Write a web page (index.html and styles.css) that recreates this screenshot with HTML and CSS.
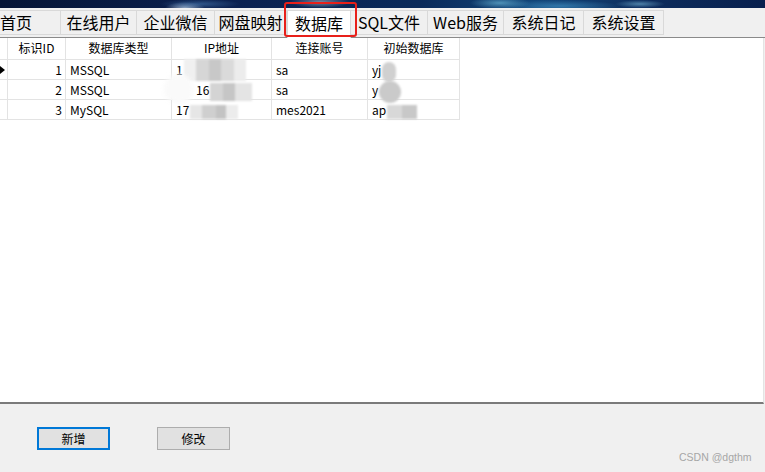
FILE: index.html
```html
<!DOCTYPE html>
<html lang="zh">
<head>
<meta charset="utf-8">
<link rel="stylesheet" href="styles.css">
</head>
<body>
<div class="window">
  <div class="banner"></div>
  <div class="tabstrip">
    <div class="tab first">首页</div>
    <div class="tab w75">在线用户</div>
    <div class="tab w78">企业微信</div>
    <div class="tab w72">网盘映射</div>
    <div class="tab sel">数据库</div>
    <div class="tab w77">SQL文件</div>
    <div class="tab w75">Web服务</div>
    <div class="tab w80">系统日记</div>
    <div class="tab w80">系统设置</div>
  </div>
  <div class="grid-area">
    <div class="grid">
      <div class="hc rh"></div>
      <div class="hc">标识ID</div>
      <div class="hc">数据库类型</div>
      <div class="hc">IP地址</div>
      <div class="hc">连接账号</div>
      <div class="hc">初始数据库</div>

      <div class="c rh"><span class="arrow"></span></div>
      <div class="c num">1</div>
      <div class="c">MSSQL</div>
      <div class="c">1<span class="mosaic m1"></span></div>
      <div class="c">sa</div>
      <div class="c">yj<span class="mosaic m4"></span></div>

      <div class="c rh"></div>
      <div class="c num">2</div>
      <div class="c">MSSQL</div>
      <div class="c"><span class="white-blob"></span><span class="txt">16</span><span class="mosaic m2"></span></div>
      <div class="c">sa</div>
      <div class="c">y<span class="mosaic m5"></span></div>

      <div class="c rh"></div>
      <div class="c num">3</div>
      <div class="c">MySQL</div>
      <div class="c">17<span class="mosaic m3"></span></div>
      <div class="c">mes2021</div>
      <div class="c">ap<span class="mosaic m6"></span></div>
    </div>
  </div>
  <div class="bottom">
    <button class="btn primary">新增</button>
    <button class="btn">修改</button>
    <span class="watermark">CSDN @dgthm</span>
  </div>
  <div class="annot"></div>
</div>
</body>
</html>
```
FILE: styles.css
```css
html, body {
  margin: 0;
  padding: 0;
}
body {
  width: 765px;
  height: 472px;
  overflow: hidden;
  background: #f0f0f0;
  font-family: "Noto Sans CJK SC", "Noto Sans", sans-serif;
  color: #000;
}
.window {
  position: relative;
  width: 765px;
  height: 472px;
  display: flex;
  flex-direction: column;
}
.banner {
  height: 8px;
  background:
    radial-gradient(ellipse 40px 5px at 200px 4px, rgba(90,150,210,0.45), transparent),
    radial-gradient(ellipse 30px 6px at 500px 3px, rgba(120,200,230,0.6), transparent),
    radial-gradient(ellipse 60px 6px at 560px 6px, rgba(80,170,220,0.5), transparent),
    radial-gradient(ellipse 20px 6px at 185px 8px, rgba(200,220,240,0.7), transparent),
    radial-gradient(ellipse 30px 6px at 320px 2px, rgba(230,230,230,0.5), transparent),
    radial-gradient(ellipse 25px 4px at 640px 4px, rgba(140,210,240,0.5), transparent),
    linear-gradient(90deg, #061536 0%, #0b2150 30%, #0a2a5a 55%, #12467a 70%, #0d2c5c 85%, #08204e 100%);
}
.tabstrip {
  display: flex;
  align-items: flex-end;
  border-bottom: 1px solid #8a8a8a;
  box-sizing: border-box;
  height: 30px;
}
.tab {
  height: 25px;
  margin-bottom: 2px;
  box-sizing: border-box;
  border: 1px solid #d9d9d9;
  border-left: none;
  background: #f0f0f0;
  font-size: 16px;
  line-height: 23px;
  text-align: center;
  white-space: nowrap;
}
.tab.first {
  width: 61px;
  text-align: left;
  padding-left: 0;
  border-left: none;
}
.w75 { width: 76px; }
.w78 { width: 78px; }
.w72 { width: 72px; }
.w77 { width: 77px; }
.w80 { width: 80px; }
.tab.sel {
  width: 64px;
  height: 28px;
  margin-bottom: -1px;
  background: #fff;
  border: 1px solid #d9d9d9;
  border-bottom: none;
  line-height: 24px;
}
.grid-area {
  flex: 1;
  background: #fff;
  border-bottom: 2px solid #7a7a7a;
  border-right: 1px solid #e4e4e4;
  box-sizing: border-box;
  margin-right: 1px;
}
.grid {
  display: grid;
  grid-template-columns: 8px 58px 106px 100px 96px 92px;
  grid-template-rows: 22px 20px 20px 20px;
  width: 460px;
}
.hc, .c {
  box-sizing: border-box;
  border-right: 1px solid #e3e3e3;
  border-bottom: 1px solid #e3e3e3;
  font-size: 12px;
  white-space: nowrap;
  overflow: visible;
  position: relative;
}
.hc {
  text-align: center;
  line-height: 20px;
}
.c {
  line-height: 19px;
  padding-left: 4px;
}
.c.num {
  text-align: right;
  padding-left: 0;
  padding-right: 3px;
}
.rh {
  padding: 0;
}
.arrow {
  position: absolute;
  left: 0;
  top: 6px;
  width: 0;
  height: 0;
  border-top: 4px solid transparent;
  border-bottom: 4px solid transparent;
  border-left: 5px solid #000;
}
.txt {
  position: relative;
  margin-left: 20px;
}
.mosaic {
  display: inline-block;
  vertical-align: middle;
  height: 14px;
  filter: blur(1.2px);
  margin-left: 1px;
}
.m1 {
  width: 62px;
  height: 22px;
  margin-top: -4px;
  background:
    linear-gradient(90deg, #f0f0f0 0 20%, #d6d6d6 20% 40%, #c8c8c8 40% 60%, #dadada 60% 80%, #ececec 80% 100%);
}
.m2 {
  width: 42px;
  height: 18px;
  background: linear-gradient(90deg, #d4d4d4 0 30%, #c6c6c6 30% 60%, #e4e4e4 60% 100%);
}
.m3 {
  width: 48px;
  height: 14px;
  background: linear-gradient(90deg, #e6e6e6 0 25%, #cfcfcf 25% 55%, #c3c3c3 55% 75%, #ececec 75% 100%);
}
.m4 {
  width: 14px;
  height: 20px;
  border-radius: 7px;
  background: #d0d0d0;
}
.m5 {
  width: 22px;
  height: 22px;
  border-radius: 11px;
  background: #cacaca;
}
.m6 {
  width: 30px;
  height: 14px;
  background: linear-gradient(90deg, #d8d8d8 0 50%, #c8c8c8 50% 100%);
}
.white-blob {
  position: absolute;
  left: -8px;
  top: -6px;
  width: 30px;
  height: 30px;
  border-radius: 15px;
  background: #fafafa;
  filter: blur(2px);
}
.bottom {
  height: 68px;
  display: flex;
  align-items: flex-start;
  padding: 23px 0 0 37px;
  box-sizing: border-box;
  position: relative;
}
.btn {
  width: 73px;
  height: 23px;
  box-sizing: border-box;
  background: #e1e1e1;
  border: 1px solid #adadad;
  font-family: "Noto Sans CJK SC", sans-serif;
  font-size: 12px;
  padding: 0;
  line-height: 19px;
  margin-right: 47px;
  color: #000;
}
.btn.primary {
  border: 2px solid #0078d7;
}
.watermark {
  position: absolute;
  left: 679px;
  top: 47px;
  font-family: "Liberation Sans", sans-serif;
  font-size: 10.5px;
  color: #a6a6a6;
}
.annot {
  position: absolute;
  left: 284px;
  top: 2px;
  width: 73px;
  height: 35px;
  box-sizing: border-box;
  border: 2px solid #e8201a;
  border-radius: 3px;
}
```
